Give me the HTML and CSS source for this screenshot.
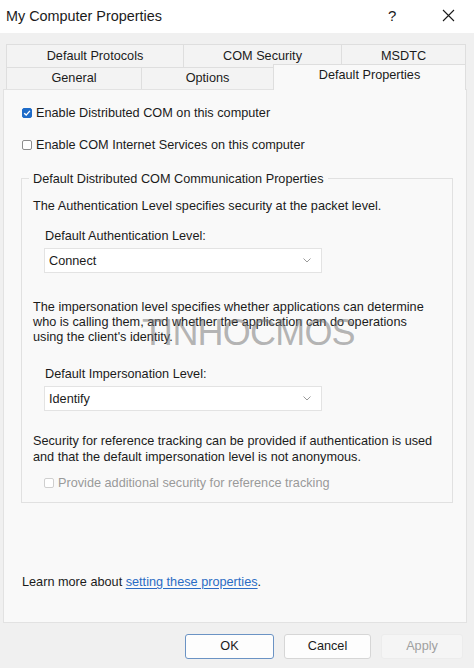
FILE: index.html
```html
<!DOCTYPE html>
<html>
<head>
<meta charset="utf-8">
<link rel="stylesheet" href="styles.css">
</head>
<body>
<div class="window">
  <div class="titlebar">
    <span class="title">My Computer Properties</span>
    <span class="tb-help">?</span>
    <span class="tb-close"><svg width="13" height="13" viewBox="0 0 13 13"><path d="M1 1L12 12M12 1L1 12" stroke="#1a1a1a" stroke-width="1.1" fill="none"/></svg></span>
  </div>
  <div class="tabs">
    <div class="tabrow">
      <div class="tab t-proto">Default Protocols</div>
      <div class="tab t-sec">COM Security</div>
      <div class="tab t-msdtc">MSDTC</div>
    </div>
    <div class="tabrow">
      <div class="tab t-gen">General</div>
      <div class="tab t-opt">Options</div>
      <div class="tab t-def selected">Default Properties</div>
    </div>
  </div>
  <div class="panel">
    <div class="check-row">
      <span class="cb checked"><svg width="8" height="8" viewBox="0 0 8 8"><path d="M1.2 4.2L3.2 6.1L6.9 1.9" stroke="#fff" stroke-width="1.4" fill="none"/></svg></span>
      <span>Enable Distributed COM on this computer</span>
    </div>
    <div class="check-row second">
      <span class="cb"></span>
      <span>Enable COM Internet Services on this computer</span>
    </div>
    <div class="group">
      <div class="group-title">Default Distributed COM Communication Properties</div>
      <p class="p1">The Authentication Level specifies security at the packet level.</p>
      <div class="field-label l1">Default Authentication Level:</div>
      <div class="select"><span>Connect</span><svg class="chev" width="8" height="5" viewBox="0 0 8 5"><path d="M0.5 0.5L4 4L7.5 0.5" stroke="#9a9a9a" stroke-width="1" fill="none"/></svg></div>
      <p class="p2">The impersonation level specifies whether applications can determine who is calling them, and whether the application can do operations using the client's identity.</p>
      <div class="field-label l2">Default Impersonation Level:</div>
      <div class="select"><span>Identify</span><svg class="chev" width="8" height="5" viewBox="0 0 8 5"><path d="M0.5 0.5L4 4L7.5 0.5" stroke="#9a9a9a" stroke-width="1" fill="none"/></svg></div>
      <p class="p3">Security for reference tracking can be provided if authentication is used and that the default impersonation level is not anonymous.</p>
      <div class="check-row disabled">
        <span class="cb dis"></span>
        <span>Provide additional security for reference tracking</span>
      </div>
    </div>
    <div class="learn">Learn more about <a class="link">setting these properties</a>.</div>
  </div>
  <div class="footer">
    <div class="btn ok">OK</div>
    <div class="btn cancel">Cancel</div>
    <div class="btn apply">Apply</div>
  </div>
  <div class="watermark">TINHOCMOS</div>
</div>
</body>
</html>
```
FILE: styles.css
```css
html, body {
  margin: 0;
  padding: 0;
}
body {
  width: 474px;
  height: 668px;
  overflow: hidden;
  background: #f0f0f0;
  font-family: "Liberation Sans", Arial, sans-serif;
  font-size: 12.7px;
  color: #1b1b1b;
}
.window {
  position: relative;
  width: 474px;
  height: 668px;
}
.titlebar {
  height: 33px;
  background: #ffffff;
  display: flex;
  align-items: center;
}
.title {
  font-size: 14.4px;
  margin-left: 6px;
  flex: 1;
  margin-top: -2px;
}
.tb-help {
  font-size: 15px;
  width: 12px;
  margin-right: 42px;
  margin-top: -2px;
}
.tb-close {
  width: 13px;
  height: 13px;
  margin-right: 19px;
  margin-top: -2px;
}
.tb-close svg { display: block; }
.tabs {
  margin: 11px 8px 0 6px;
}
.tabrow {
  display: flex;
}
.tab {
  box-sizing: border-box;
  height: 23px;
  line-height: 22px;
  text-align: center;
  background: #f3f3f3;
  border-top: 1px solid #dedede;
  border-left: 1px solid #dedede;
  color: #1b1b1b;
}
.tabrow + .tabrow .tab { height: 22px; line-height: 21px; }
.t-proto { width: 177px; }
.t-sec { width: 158px; }
.t-msdtc { width: 125px; border-right: 1px solid #dedede; }
.t-gen { width: 135px; }
.t-opt { width: 132px; }
.t-def { width: 193px; }
.tabrow + .tabrow .tab.selected {
  position: relative;
  z-index: 1;
  height: 26px;
  margin-top: -3px;
  margin-bottom: -1px;
  line-height: 21px;
  background: #f9f9f9;
  border-right: 1px solid #dedede;
}
.panel {
  box-sizing: border-box;
  margin-left: 3px;
  width: 464px;
  height: 534px;
  background: #f9f9f9;
  border: 1px solid #e2e2e2;
  padding: 15px 0 0 18px;
}
.check-row {
  display: flex;
  align-items: center;
  height: 16px;
  line-height: 16px;
}
.check-row.second { margin-top: 16px; }
.cb {
  box-sizing: border-box;
  width: 10px;
  height: 10px;
  border: 1px solid #8d8d8d;
  border-radius: 2px;
  background: #fff;
  margin-right: 4px;
  display: flex;
  align-items: center;
  justify-content: center;
}
.cb.checked {
  background: #1e6bc8;
  border-color: #1e6bc8;
}
.cb.checked svg { display: block; }
.cb.dis { border-color: #cfcfcf; }
.group {
  box-sizing: border-box;
  margin: 25px 13px 0 -1px;
  border: 1px solid #e1e1e1;
  padding: 0 0 11px 11px;
}
.group-title {
  width: fit-content;
  margin: -8px 0 0 -4px;
  padding: 0 4px;
  background: #f9f9f9;
  line-height: 16px;
}
.group p {
  margin: 0;
}
.p1 { margin-top: 11px !important; line-height: 16px; }
.field-label {
  margin-left: 12px;
  line-height: 16px;
}
.l1 { margin-top: 14px; }
.l2 { margin-top: 21px; }
.select {
  box-sizing: border-box;
  margin: 4px 0 0 11px;
  width: 278px;
  height: 25px;
  background: #ffffff;
  border: 1px solid #e3e3e3;
  display: flex;
  align-items: center;
  justify-content: space-between;
  padding: 0 10px 0 4px;
}
.chev { display: block; }
.p2 { margin-top: 27px !important; line-height: 15px; width: 400px; }
.p3 { margin-top: 22px !important; line-height: 16px; width: 410px; }
.check-row.disabled {
  margin-top: 10px;
  margin-left: 11px;
  color: #9a9a9a;
}
.learn {
  margin-top: 71px;
  line-height: 16px;
}
.link {
  color: #2a6cc4;
  text-decoration: underline;
  text-underline-offset: 2px;
}
.footer {
  display: flex;
  justify-content: flex-end;
  gap: 10px;
  padding: 11px 11px 0 0;
}
.btn {
  box-sizing: border-box;
  height: 25px;
  line-height: 23px;
  text-align: center;
  background: #fdfdfd;
  border: 1px solid #d6d6d6;
  border-radius: 3px;
}
.ok { width: 89px; border-color: #6b93c4; }
.cancel { width: 87px; }
.apply { width: 82px; background: #f5f5f5; border-color: #ececec; color: #a0a0a0; }
.watermark {
  position: absolute;
  left: 142px;
  top: 312px;
  font-size: 36px;
  color: rgba(120, 120, 120, 0.55);
  letter-spacing: -0.8px;
  pointer-events: none;
}
```
